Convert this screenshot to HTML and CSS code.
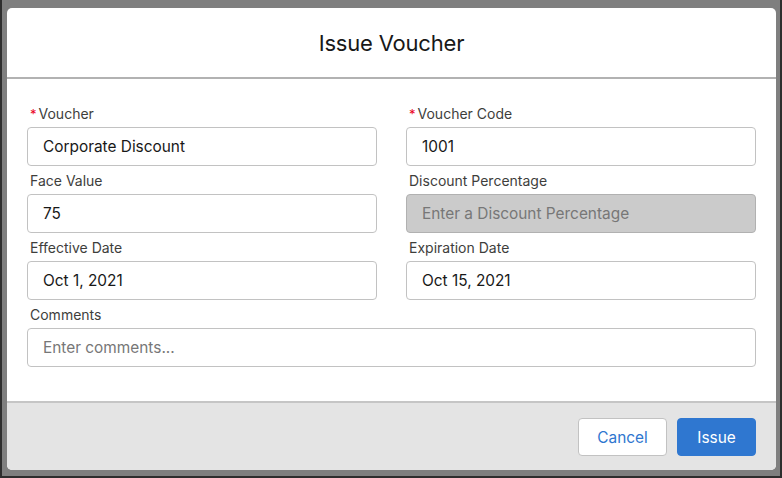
FILE: index.html
```html
<!DOCTYPE html>
<html>
<head>
<meta charset="utf-8">
<link rel="stylesheet" href="styles.css">
</head>
<body>
<div class="screen">
  <div class="modal">
    <header class="modal-header">
      <h2 class="modal-title">Issue Voucher</h2>
    </header>
    <div class="modal-body">
      <div class="field">
        <label class="label"><span class="req">*</span>Voucher</label>
        <div class="input">Corporate Discount</div>
      </div>
      <div class="field">
        <label class="label"><span class="req">*</span>Voucher Code</label>
        <div class="input">1001</div>
      </div>
      <div class="field">
        <label class="label">Face Value</label>
        <div class="input">75</div>
      </div>
      <div class="field">
        <label class="label">Discount Percentage</label>
        <div class="input disabled placeholder">Enter a Discount Percentage</div>
      </div>
      <div class="field">
        <label class="label">Effective Date</label>
        <div class="input">Oct 1, 2021</div>
      </div>
      <div class="field">
        <label class="label">Expiration Date</label>
        <div class="input">Oct 15, 2021</div>
      </div>
      <div class="field wide">
        <label class="label">Comments</label>
        <div class="input placeholder">Enter comments...</div>
      </div>
    </div>
    <footer class="modal-footer">
      <button class="btn btn-neutral">Cancel</button>
      <button class="btn btn-brand">Issue</button>
    </footer>
  </div>
</div>
</body>
</html>
```
FILE: styles.css
```css
* { box-sizing: border-box; }
html, body { margin: 0; padding: 0; }
body {
  font-family: Inter, "Noto Sans", "Liberation Sans", sans-serif;
  background: #7f7f7f;
}
.screen {
  width: 782px;
  height: 478px;
  background: #7f7f7f;
  border-left: 2px solid #2e2e2e;
  border-right: 2px solid #2e2e2e;
  border-bottom: 2px solid #2e2e2e;
  padding: 8px 4px 6px 5px;
}
.modal {
  width: 769px;
  height: 462px;
  background: #fff;
  border-radius: 5px;
  overflow: hidden;
  display: flex;
  flex-direction: column;
}
.modal-header {
  height: 71px;
  border-bottom: 2px solid #b2b2b2;
  display: flex;
  align-items: center;
  justify-content: center;
}
.modal-title {
  margin: 0;
  font-size: 22px;
  font-weight: 400;
  color: #181818;
  letter-spacing: -0.2px;
  padding-top: 1px;
}
.modal-body {
  height: 322px;
  padding: 25px 20px 34px 20px;
  display: grid;
  grid-template-columns: 350px 350px;
  column-gap: 29px;
  row-gap: 5px;
  align-content: start;
}
.field { display: flex; flex-direction: column; }
.field.wide { grid-column: 1 / 3; }
.label {
  height: 20px;
  line-height: 20px;
  margin-bottom: 3px;
  font-size: 14px;
  color: #3e3e3c;
  padding-left: 3px;
}
.req {
  color: #ea001e;
  margin-right: 2px;
  font-size: 13px;
}
.input {
  height: 39px;
  border: 1px solid #c2c2c2;
  border-radius: 4px;
  padding: 0 15px;
  display: flex;
  align-items: center;
  font-size: 15.4px;
  color: #181818;
  background: #fff;
}
.input.placeholder { color: #777; }
.input.disabled {
  background: #cbcbcb;
  border-color: #b1b1b1;
}
.modal-footer {
  flex: 1;
  background: #e4e4e4;
  border-top: 2px solid #c5c5c5;
  padding: 15px 20px 0 20px;
  display: flex;
  justify-content: flex-end;
  align-items: flex-start;
  gap: 10px;
}
.btn {
  height: 38px;
  border-radius: 4px;
  font-family: inherit;
  font-size: 15.4px;
  padding: 0;
  cursor: pointer;
}
.btn-neutral {
  width: 89px;
  background: #fff;
  border: 1px solid #c2c2c2;
  color: #2f76cf;
}
.btn-brand {
  width: 79px;
  background: #2f77d0;
  border: 1px solid #2f77d0;
  color: #fff;
}
```
